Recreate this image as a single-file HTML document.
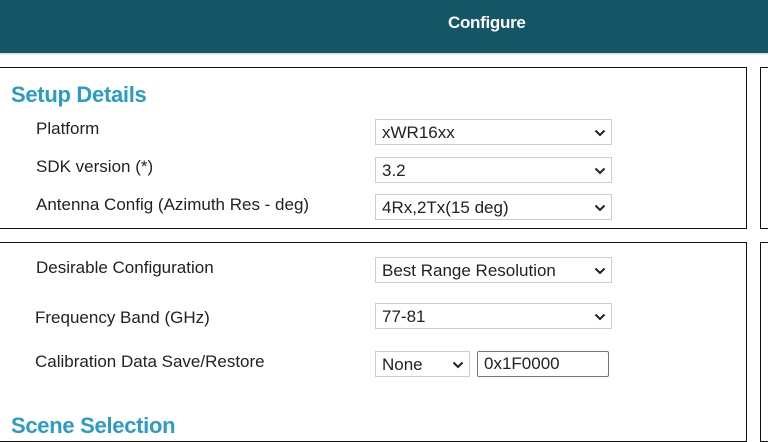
<!DOCTYPE html>
<html><head><meta charset="utf-8"><style>
*{margin:0;padding:0;box-sizing:border-box}
body{width:768px;height:431px;overflow:hidden;background:#fff;font-family:"Liberation Sans",sans-serif;position:relative;color:#222}
.hdr{position:absolute;left:0;top:0;width:768px;height:53px;background:#145566;box-shadow:0 1px 2px rgba(0,0,0,.2)}
.hdr span{position:absolute;left:448px;top:13px;color:#fff;font-weight:bold;font-size:17px;letter-spacing:-0.3px}
.box{position:absolute;border:1.5px solid #111;background:#fff}
.t{position:absolute;color:#2a9cc6;font-weight:bold;font-size:22px;letter-spacing:-0.3px}
.l{position:absolute;font-size:17px;color:#222}
.s{position:absolute;border:1px solid #ccc;height:26px;font-size:17px;padding:3px 0 0 6px;color:#222;background:#fff}
.s svg{position:absolute;right:5px;top:9px}
.inp{position:absolute;border:1px solid #777;border-radius:2px;height:26px;font-size:17px;padding:2px 0 0 6px}
</style></head><body>
<div class="hdr"><span>Configure</span></div>
<div class="box" style="left:-2px;top:67px;width:749px;height:162px"></div>
<div class="box" style="left:760px;top:67px;width:20px;height:162px"></div>
<div class="box" style="left:-2px;top:242px;width:749px;height:200px"></div>
<div class="box" style="left:760px;top:242px;width:20px;height:200px"></div>
<div class="t" style="left:11px;top:82px">Setup Details</div>
<div class="l" style="left:36px;top:119px">Platform</div>
<div class="l" style="left:36px;top:157px">SDK version (*)</div>
<div class="l" style="left:36px;top:195px">Antenna Config (Azimuth Res - deg)</div>
<div class="l" style="left:36px;top:258px">Desirable Configuration</div>
<div class="l" style="left:35px;top:308px">Frequency Band (GHz)</div>
<div class="l" style="left:35px;top:352px">Calibration Data Save/Restore</div>
<div class="t" style="left:11px;top:413px">Scene Selection</div>

<div class="s" style="left:375px;top:119px;width:237px">xWR16xx<svg width="12" height="8" viewBox="0 0 12 8"><path d="M1.5 1.5l4.5 4.5 4.5-4.5" stroke="#222" stroke-width="2" fill="none"/></svg></div>
<div class="s" style="left:375px;top:157px;width:237px">3.2<svg width="12" height="8" viewBox="0 0 12 8"><path d="M1.5 1.5l4.5 4.5 4.5-4.5" stroke="#222" stroke-width="2" fill="none"/></svg></div>
<div class="s" style="left:375px;top:194px;width:237px">4Rx,2Tx(15 deg)<svg width="12" height="8" viewBox="0 0 12 8"><path d="M1.5 1.5l4.5 4.5 4.5-4.5" stroke="#222" stroke-width="2" fill="none"/></svg></div>
<div class="s" style="left:375px;top:257px;width:237px">Best Range Resolution<svg width="12" height="8" viewBox="0 0 12 8"><path d="M1.5 1.5l4.5 4.5 4.5-4.5" stroke="#222" stroke-width="2" fill="none"/></svg></div>
<div class="s" style="left:375px;top:303px;width:237px">77-81<svg width="12" height="8" viewBox="0 0 12 8"><path d="M1.5 1.5l4.5 4.5 4.5-4.5" stroke="#222" stroke-width="2" fill="none"/></svg></div>
<div class="s" style="left:375px;top:351px;width:95px">None<svg width="12" height="8" viewBox="0 0 12 8"><path d="M1.5 1.5l4.5 4.5 4.5-4.5" stroke="#222" stroke-width="2" fill="none"/></svg></div>
<div class="inp" style="left:477px;top:351px;width:132px">0x1F0000</div>
</body></html>
